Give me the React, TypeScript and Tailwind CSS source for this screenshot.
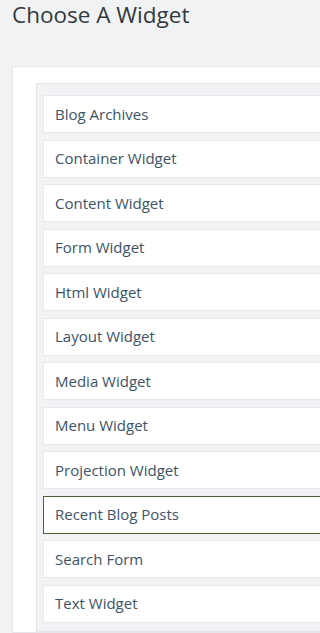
const widgets = [
  'Blog Archives',
  'Container Widget',
  'Content Widget',
  'Form Widget',
  'Html Widget',
  'Layout Widget',
  'Media Widget',
  'Menu Widget',
  'Projection Widget',
  'Recent Blog Posts',
  'Search Form',
  'Text Widget',
];

export default function App() {
  return (
    <div
      className="flex h-[633px] w-full flex-col overflow-hidden bg-[#f1f2f4] pl-[12px]"
      style={{ fontFamily: '"Open Sans", "Noto Sans", sans-serif' }}
    >
      <h1 className="text-[22.5px] leading-[29px] text-[#333a40]">Choose A Widget</h1>
      <div className="mt-[37px] flex-1 border-y border-l border-[#e4e6e9] bg-white pl-[23px] pt-[16px]">
        <div className="h-full border-y border-l border-[#e2e4e7] bg-[#f2f3f4] pl-[6px] pt-[11px]">
          <ul className="flex flex-col gap-[6.5px]">
            {widgets.map((name) => (
              <li
                key={name}
                className={
                  name === 'Recent Blog Posts'
                    ? 'flex h-[38px] items-center border-y border-l border-[#4b6232] bg-white pl-[11px] text-[15px] whitespace-nowrap text-[#3b5468]'
                    : 'flex h-[38px] items-center border-y border-l border-[#e6e8eb] bg-white pl-[11px] text-[15px] whitespace-nowrap text-[#3b5468]'
                }
              >
                {name}
              </li>
            ))}
          </ul>
        </div>
      </div>
    </div>
  );
}
